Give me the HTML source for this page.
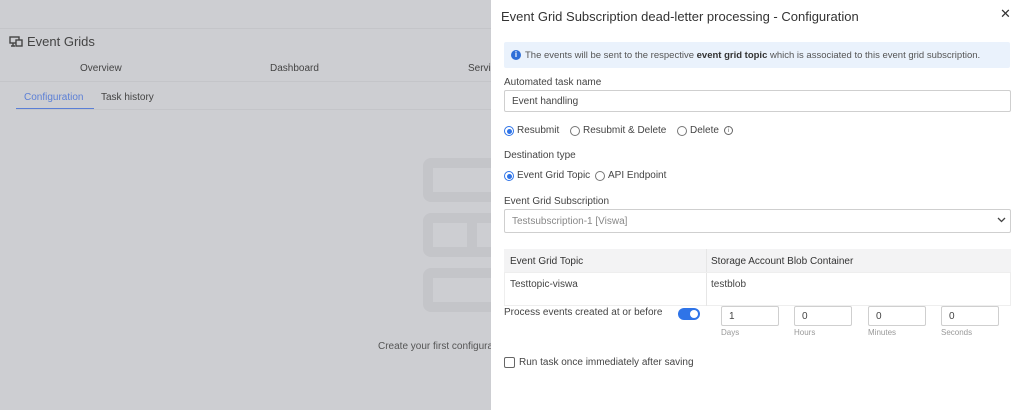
<!DOCTYPE html>
<html><head><meta charset="utf-8"><style>
*{box-sizing:border-box;margin:0;padding:0}
body{width:1024px;height:410px;overflow:hidden;font-family:"Liberation Sans",sans-serif;background:#cdced2;position:relative;color:#333}
.abs{position:absolute}
.left{left:0;top:0;width:491px;height:410px;background:#cdced2}
.panel{left:491px;top:0;width:533px;height:410px;background:#fff}
.t{position:absolute;white-space:nowrap}
.inp{position:absolute;border:1px solid #cfcfcf;border-radius:2px;background:#fff;font-size:10px;color:#444;padding-left:7px;display:flex;align-items:center}
.radio{position:absolute;width:10px;height:10px;border:1px solid #777;border-radius:50%;background:#fff}
.radio.on{border-color:#2f74e8}
.radio.on::after{content:"";position:absolute;left:1.5px;top:1.5px;width:5px;height:5px;border-radius:50%;background:#2f74e8}
.lbl{font-size:10px;color:#444}
</style></head><body>
<div class="abs left">
  <div class="abs" style="left:0;top:28px;width:491px;height:1px;background:#c4c5c9"></div>
  <svg class="abs" style="left:9px;top:36px" width="14" height="12" viewBox="0 0 14 12"><rect x="1" y="1" width="9" height="6" fill="none" stroke="#444" stroke-width="1.4"/><rect x="7" y="4" width="6" height="6" fill="#cdced2" stroke="#444" stroke-width="1.4"/><path d="M2 10h4M4 7v3" stroke="#444" stroke-width="1.4"/></svg>
  <div class="t" style="left:27px;top:34px;font-size:13px;color:#444">Event Grids</div>
  <div class="t" style="left:80px;top:63px;font-size:10px;color:#444">Overview</div>
  <div class="t" style="left:270px;top:63px;font-size:10px;color:#444">Dashboard</div>
  <div class="t" style="left:468px;top:63px;font-size:10px;color:#444">Servi</div>
  <div class="abs" style="left:0;top:81px;width:491px;height:1px;background:#c4c5c9"></div>
  <div class="t" style="left:24px;top:92px;font-size:10px;color:#5b7fd6">Configuration</div>
  <div class="t" style="left:101px;top:92px;font-size:10px;color:#444">Task history</div>
  <div class="abs" style="left:16px;top:108px;width:78px;height:2px;background:#5b7fd6"></div>
  <div class="abs" style="left:16px;top:109px;width:475px;height:1px;background:#c4c5c9"></div>
  <div class="abs" style="left:423px;top:158px;width:80px;height:44px;border:10px solid #c4c5c9;border-radius:8px"></div>
  <div class="abs" style="left:423px;top:213px;width:80px;height:44px;border:10px solid #c4c5c9;border-radius:8px"></div>
  <div class="abs" style="left:467px;top:218px;width:10px;height:34px;background:#c4c5c9"></div>
  <div class="abs" style="left:423px;top:268px;width:80px;height:44px;border:10px solid #c4c5c9;border-radius:8px"></div>
  <div class="t" style="left:378px;top:341px;font-size:10px;color:#555">Create your first configuration</div>
</div>
<div class="abs panel">
  <div class="t" style="left:10px;top:9px;font-size:13px;color:#333">Event Grid Subscription dead-letter processing - Configuration</div>
  <div class="t" style="left:509px;top:6px;font-size:13px;color:#333">✕</div>
  <div class="abs" style="left:13px;top:42px;width:506px;height:26px;background:#eaf2fc;border-radius:2px"></div>
  <div class="abs" style="left:20px;top:50px;width:10px;height:10px;border-radius:50%;background:#2f6fd8;color:#fff;font-size:8px;font-weight:bold;text-align:center;line-height:10px">i</div>
  <div class="t" style="left:34px;top:50px;font-size:9.5px;color:#555">The events will be sent to the respective <b style="color:#333">event grid topic</b> which is associated to this event grid subscription.</div>
  <div class="t lbl" style="left:13px;top:77px">Automated task name</div>
  <div class="inp" style="left:13px;top:90px;width:507px;height:22px">Event handling</div>
  <div class="radio on" style="left:13px;top:126px"></div><div class="t lbl" style="left:26px;top:125px">Resubmit</div>
  <div class="radio" style="left:79px;top:126px"></div><div class="t lbl" style="left:92px;top:125px">Resubmit &amp; Delete</div>
  <div class="radio" style="left:186px;top:126px"></div><div class="t lbl" style="left:199px;top:125px">Delete</div>
  <div class="abs" style="left:233px;top:126px;width:9px;height:9px;border:1px solid #666;border-radius:50%;font-size:6px;text-align:center;line-height:8px;color:#666">i</div>
  <div class="t lbl" style="left:13px;top:150px">Destination type</div>
  <div class="radio on" style="left:13px;top:171px"></div><div class="t lbl" style="left:26px;top:170px">Event Grid Topic</div>
  <div class="radio" style="left:104px;top:171px"></div><div class="t lbl" style="left:117px;top:170px">API Endpoint</div>
  <div class="t lbl" style="left:13px;top:196px">Event Grid Subscription</div>
  <div class="inp" style="left:13px;top:209px;width:507px;height:24px;color:#888">Testsubscription-1 [Viswa]</div>
  <svg class="abs" style="left:506px;top:217px" width="9" height="6" viewBox="0 0 9 6"><path d="M1 1l3.5 3.5L8 1" fill="none" stroke="#444" stroke-width="1.3"/></svg>
  <div class="abs" style="left:13px;top:249px;width:507px;height:57px;border:1px solid #eee"></div>
  <div class="abs" style="left:13px;top:249px;width:507px;height:23px;background:#f3f3f4"></div>
  <div class="abs" style="left:215px;top:249px;width:1px;height:57px;background:#e6e6e6"></div>
  <div class="abs" style="left:13px;top:272px;width:507px;height:1px;background:#eee"></div>
  <div class="t lbl" style="left:19px;top:256px;color:#333">Event Grid Topic</div>
  <div class="t lbl" style="left:220px;top:256px;color:#333">Storage Account Blob Container</div>
  <div class="t lbl" style="left:19px;top:279px">Testtopic-viswa</div>
  <div class="t lbl" style="left:220px;top:279px">testblob</div>
  <div class="t lbl" style="left:13px;top:307px">Process events created at or before</div>
  <div class="abs" style="left:187px;top:308px;width:22px;height:12px;border-radius:6px;background:#2f74e8"></div>
  <div class="abs" style="left:199px;top:310px;width:8px;height:8px;border-radius:50%;background:#fff"></div>
  <div class="inp" style="left:230px;top:306px;width:58px;height:20px">1</div>
  <div class="inp" style="left:303px;top:306px;width:58px;height:20px">0</div>
  <div class="inp" style="left:377px;top:306px;width:58px;height:20px">0</div>
  <div class="inp" style="left:450px;top:306px;width:58px;height:20px">0</div>
  <div class="t" style="left:230px;top:328px;font-size:8px;color:#999">Days</div>
  <div class="t" style="left:303px;top:328px;font-size:8px;color:#999">Hours</div>
  <div class="t" style="left:377px;top:328px;font-size:8px;color:#999">Minutes</div>
  <div class="t" style="left:450px;top:328px;font-size:8px;color:#999">Seconds</div>
  <div class="abs" style="left:13px;top:357px;width:11px;height:11px;border:1px solid #666;border-radius:2px"></div>
  <div class="t lbl" style="left:28px;top:357px">Run task once immediately after saving</div>
</div>
</body></html>
